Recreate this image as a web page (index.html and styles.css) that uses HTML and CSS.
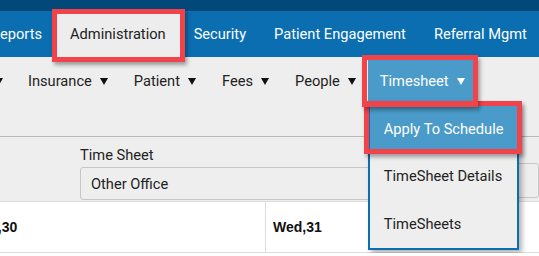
FILE: index.html
```
<!DOCTYPE html>
<html>
<head>
<meta charset="utf-8">
<link rel="stylesheet" href="styles.css">
</head>
<body>
<div class="topstrip"></div>
<nav class="nav">
  <a class="nav-item">Reports</a>
  <a class="nav-item active">Administration</a>
  <a class="nav-item">Security</a>
  <a class="nav-item">Patient Engagement</a>
  <a class="nav-item">Referral Mgmt</a>
</nav>
<div class="subnav">
  <div class="sub-item lead"><span class="caret"></span></div>
  <div class="sub-item">Insurance<span class="caret"></span></div>
  <div class="sub-item">Patient<span class="caret"></span></div>
  <div class="sub-item">Fees<span class="caret"></span></div>
  <div class="sub-item">People<span class="caret"></span></div>
  <div class="sub-item open">Timesheet<span class="caret white"></span>
    <div class="dropdown">
      <div class="dd-item selected">Apply To Schedule</div>
      <div class="dd-item">TimeSheet Details</div>
      <div class="dd-item">TimeSheets</div>
    </div>
  </div>
</div>
<div class="filters">
  <div class="field">
    <div class="label">Time Sheet</div>
    <div class="select">Other Office</div>
  </div>
  <div class="field2"></div>
</div>
<div class="table">
  <div class="cell first">Tue,30</div>
  <div class="cell">Wed,31</div>
</div>
</body>
</html>
```
FILE: styles.css
```
html, body {
  margin: 0;
  padding: 0;
  overflow: hidden;
  background: #ffffff;
  font-family: "Roboto", "Liberation Sans", sans-serif;
}
.topstrip {
  height: 11px;
  background: #02497a;
}
.nav {
  display: flex;
  height: 46px;
  background: #0a6eb1;
  margin-left: -23px;
}
.nav-item {
  display: flex;
  align-items: center;
  padding: 0 14px;
  color: #ffffff;
  font-size: 14.65px;
  white-space: nowrap;
  position: relative;
}
.nav-item.active {
  background: #ededed;
  color: #222222;
}
.nav-item.active::after {
  content: "";
  position: absolute;
  left: -4px;
  right: -5px;
  top: -2px;
  bottom: -5px;
  border: 5px solid #f2434a;
  box-shadow: 2px 3px 4px rgba(0,0,0,0.35);
}
.subnav {
  display: flex;
  height: 79px;
  align-items: flex-start;
  background: #eeeeee;
  border-bottom: 1px solid #b9b9b9;
  margin-left: -20px;
}
.sub-item {
  display: flex;
  align-items: center;
  height: 48px;
  padding: 0 13px;
  font-size: 14.65px;
  color: #222222;
  white-space: nowrap;
  position: relative;
}
.caret {
  display: inline-block;
  width: 0;
  height: 0;
  margin-left: 8px;
  border-left: 4px solid transparent;
  border-right: 4px solid transparent;
  border-top: 7px solid #111111;
}
.sub-item.lead {
  padding: 0 12px 0 15px;
}
.sub-item.lead .caret {
  margin-left: 0;
}
.caret.white {
  border-top-color: #ffffff;
}
.sub-item.open {
  background: #4a9bc9;
  color: #ffffff;
  padding: 0 12px;
  margin-left: -1px;
}
.sub-item.open::after {
  content: "";
  position: absolute;
  left: -6px;
  right: -1px;
  top: -2px;
  bottom: -2px;
  border: 5px solid #f2434a;
  box-shadow: 2px 3px 4px rgba(0,0,0,0.35);
  z-index: 3;
}
.dropdown {
  position: absolute;
  left: 0;
  top: 46px;
  width: 147px;
  background: #eeeeee;
  border: 2px solid #0a6eb1;
  box-shadow: 3px 3px 5px rgba(0,0,0,0.3);
  z-index: 2;
}
.dd-item {
  height: 47.5px;
  display: flex;
  align-items: center;
  padding-left: 14px;
  font-size: 14.65px;
  color: #222222;
  position: relative;
}
.dd-item.selected {
  background: #4a9bc9;
  color: #ffffff;
}
.dd-item.selected::after {
  content: "";
  position: absolute;
  left: -6px;
  right: -5px;
  top: -4px;
  bottom: -1px;
  border: 5px solid #f2434a;
  box-shadow: 2px 3px 4px rgba(0,0,0,0.35);
  z-index: 4;
}
.filters {
  display: flex;
  align-items: flex-start;
  height: 65px;
  background: #eeeeee;
  border-bottom: 1px solid #dddddd;
  padding-left: 80px;
  box-sizing: border-box;
}
.field {
  padding-top: 9px;
  width: 410px;
}
.label {
  font-size: 14.65px;
  line-height: 18px;
  color: #222222;
  margin-bottom: 3px;
}
.select {
  height: 31px;
  border: 1px solid #c6c6c6;
  border-radius: 3px;
  background: #eeeeee;
  display: flex;
  align-items: center;
  padding-left: 10px;
  font-size: 14.65px;
  color: #222222;
}
.field2 {
  margin-top: 26px;
  margin-left: 20px;
  width: 100px;
  height: 33px;
  border: 1px solid #c6c6c6;
  border-radius: 3px;
}
.table {
  display: grid;
  grid-template-columns: 298px 1fr;
  margin-left: -33px;
  height: 50px;
  border-bottom: 1px solid #dddddd;
}
.cell {
  display: flex;
  align-items: center;
  padding-left: 7px;
  font-family: "Liberation Sans", Arial, sans-serif;
  font-weight: bold;
  font-size: 14px;
  color: #111111;
  border-left: 1px solid #dddddd;
}
.cell.first {
  border-left: none;
}
```
